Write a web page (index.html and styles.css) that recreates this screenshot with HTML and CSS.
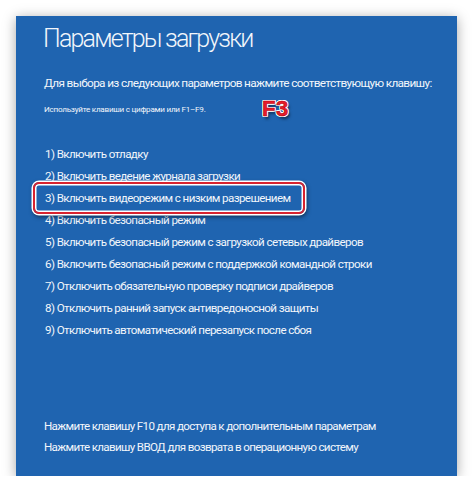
FILE: index.html
```html
<!DOCTYPE html>
<html lang="ru">
<head>
<meta charset="utf-8">
<link rel="stylesheet" href="styles.css">
</head>
<body>
<div class="screen">
  <h1 class="title">Параметры загрузки</h1>
  <p class="lead">Для выбора из следующих параметров нажмите соответствующую клавишу:</p>
  <div class="hint-row">
    <span class="hint">Используйте клавиши с цифрами или F1–F9.</span>
    <span class="badge">F3</span>
  </div>
  <ul class="options">
    <li>1) Включить отладку</li>
    <li>2) Включить ведение журнала загрузки</li>
    <li class="selected"><span class="mark">3) Включить видеорежим с низким разрешением</span></li>
    <li>4) Включить безопасный режим</li>
    <li>5) Включить безопасный режим с загрузкой сетевых драйверов</li>
    <li>6) Включить безопасный режим с поддержкой командной строки</li>
    <li>7) Отключить обязательную проверку подписи драйверов</li>
    <li>8) Отключить ранний запуск антивредоносной защиты</li>
    <li>9) Отключить автоматический перезапуск после сбоя</li>
  </ul>
  <div class="footer">
    <p>Нажмите клавишу F10 для доступа к дополнительным параметрам</p>
    <p>Нажмите клавишу ВВОД для возврата в операционную систему</p>
  </div>
</div>
</body>
</html>
```
FILE: styles.css
```css
html, body {
  margin: 0;
  padding: 0;
  background: #ffffff;
}
body {
  padding: 16px 0 0 16px;
  font-family: Roboto, "Liberation Sans", sans-serif;
}
.screen {
  width: 441px;
  height: 460px;
  box-sizing: border-box;
  background: #1f64b0;
  color: #f2f6fb;
  box-shadow: 0 2px 12px rgba(0, 0, 0, 0.35);
  padding: 6px 0 0 27px;
  display: flex;
  flex-direction: column;
}
.title {
  margin: 0;
  font-weight: 300;
  font-size: 25px;
  line-height: 34px;
  letter-spacing: -1.8px;
}
.lead {
  margin: 18px 0 0 1px;
  font-size: 11.8px;
  line-height: 18px;
  letter-spacing: -0.65px;
  white-space: nowrap;
}
.hint-row {
  display: flex;
  align-items: center;
  margin-top: 4px;
  height: 26px;
}
.hint {
  font-size: 8.1px;
  letter-spacing: -0.25px;
  margin-left: 1px;
  width: 218px;
}
.badge {
  font-family: "Liberation Sans", sans-serif;
  font-weight: bold;
  font-size: 22px;
  color: #e81c2a;
  letter-spacing: 0.5px;
  -webkit-text-stroke: 0.6px #b00010;
  text-shadow: 1px 0 0 #fff, -1px 0 0 #fff, 0 1px 0 #fff, 0 -1px 0 #fff,
    1px 1px 0 #fff, -1px -1px 0 #fff, 1px -1px 0 #fff, -1px 1px 0 #fff,
    2px 3px 3px rgba(0, 0, 0, 0.55);
}
.options {
  list-style: none;
  margin: 21px 0 0 0;
  padding: 0;
  font-size: 11.6px;
  letter-spacing: -0.6px;
}
.options li {
  height: 22px;
  line-height: 22px;
  margin-left: 2px;
  white-space: nowrap;
}
.mark {
  position: relative;
  display: inline-block;
}
.mark::before {
  content: "";
  position: absolute;
  left: -12px;
  right: -15px;
  top: -5px;
  bottom: -5px;
  border: 2px solid #d8232f;
  border-radius: 6px;
  box-shadow: inset 0 0 0 1.5px #ffffff, 0 0 0 1.5px #ffffff, 1px 2px 4px 1px rgba(0, 0, 0, 0.5);
}
.footer {
  margin-top: auto;
  margin-bottom: 19px;
  font-size: 11.6px;
  letter-spacing: -0.65px;
}
.footer p {
  margin: 0 0 0 1px;
  line-height: 20.5px;
}
```
